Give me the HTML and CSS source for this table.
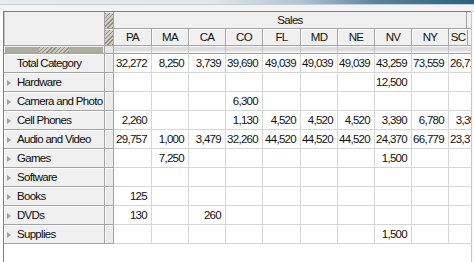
FILE: index.html
```html
<!DOCTYPE html>
<html>
<head>
<meta charset="utf-8">
<link rel="stylesheet" href="styles.css">
</head>
<body>
<div class="titlebar"></div>
<div class="spacer"></div>
<div class="frame">
  <div class="viewport">
    <div class="pivot">
      <div class="corner"></div>
      <div class="grip"><span class="hatch"></span></div>
      <div class="measure"><div class="measure-label">Sales</div></div>
      <div class="grip"><span class="hatch"></span></div>
      <div class="colhead">PA</div><div class="colhead">MA</div><div class="colhead">CA</div><div class="colhead">CO</div><div class="colhead">FL</div><div class="colhead">MD</div><div class="colhead">NE</div><div class="colhead">NV</div><div class="colhead">NY</div><div class="colhead last">SC</div>

      <div class="rowgrip"><div class="hatchbar"><span class="hatchbar-mid"></span></div></div>
      <div class="gripcross"></div>
      <div class="colgrip"></div><div class="colgrip"></div><div class="colgrip"></div><div class="colgrip"></div><div class="colgrip"></div><div class="colgrip"></div><div class="colgrip"></div><div class="colgrip"></div><div class="colgrip"></div><div class="colgrip"></div>

      <div class="rowhead"><span class="twisty none"></span>Total Category</div><div class="handle"></div>
      <div class="cell">32,272</div><div class="cell">8,250</div><div class="cell">3,739</div><div class="cell">39,690</div><div class="cell">49,039</div><div class="cell">49,039</div><div class="cell">49,039</div><div class="cell">43,259</div><div class="cell">73,559</div><div class="cell">26,719</div>

      <div class="rowhead"><span class="twisty"></span>Hardware</div><div class="handle"></div>
      <div class="cell"></div><div class="cell"></div><div class="cell"></div><div class="cell"></div><div class="cell"></div><div class="cell"></div><div class="cell"></div><div class="cell">12,500</div><div class="cell"></div><div class="cell"></div>

      <div class="rowhead"><span class="twisty"></span>Camera and Photo</div><div class="handle"></div>
      <div class="cell"></div><div class="cell"></div><div class="cell"></div><div class="cell">6,300</div><div class="cell"></div><div class="cell"></div><div class="cell"></div><div class="cell"></div><div class="cell"></div><div class="cell"></div>

      <div class="rowhead"><span class="twisty"></span>Cell Phones</div><div class="handle"></div>
      <div class="cell">2,260</div><div class="cell"></div><div class="cell"></div><div class="cell">1,130</div><div class="cell">4,520</div><div class="cell">4,520</div><div class="cell">4,520</div><div class="cell">3,390</div><div class="cell">6,780</div><div class="cell">3,390</div>

      <div class="rowhead"><span class="twisty"></span>Audio and Video</div><div class="handle"></div>
      <div class="cell">29,757</div><div class="cell">1,000</div><div class="cell">3,479</div><div class="cell">32,260</div><div class="cell">44,520</div><div class="cell">44,520</div><div class="cell">44,520</div><div class="cell">24,370</div><div class="cell">66,779</div><div class="cell">23,370</div>

      <div class="rowhead"><span class="twisty"></span>Games</div><div class="handle"></div>
      <div class="cell"></div><div class="cell">7,250</div><div class="cell"></div><div class="cell"></div><div class="cell"></div><div class="cell"></div><div class="cell"></div><div class="cell">1,500</div><div class="cell"></div><div class="cell"></div>

      <div class="rowhead"><span class="twisty"></span>Software</div><div class="handle"></div>
      <div class="cell"></div><div class="cell"></div><div class="cell"></div><div class="cell"></div><div class="cell"></div><div class="cell"></div><div class="cell"></div><div class="cell"></div><div class="cell"></div><div class="cell"></div>

      <div class="rowhead"><span class="twisty"></span>Books</div><div class="handle"></div>
      <div class="cell">125</div><div class="cell"></div><div class="cell"></div><div class="cell"></div><div class="cell"></div><div class="cell"></div><div class="cell"></div><div class="cell"></div><div class="cell"></div><div class="cell"></div>

      <div class="rowhead"><span class="twisty"></span>DVDs</div><div class="handle"></div>
      <div class="cell">130</div><div class="cell"></div><div class="cell">260</div><div class="cell"></div><div class="cell"></div><div class="cell"></div><div class="cell"></div><div class="cell"></div><div class="cell"></div><div class="cell"></div>

      <div class="rowhead"><span class="twisty"></span>Supplies</div><div class="handle"></div>
      <div class="cell"></div><div class="cell"></div><div class="cell"></div><div class="cell"></div><div class="cell"></div><div class="cell"></div><div class="cell"></div><div class="cell">1,500</div><div class="cell"></div><div class="cell"></div>
    </div>
  </div>
  <div class="edge"></div>
</div>
</body>
</html>
```
FILE: styles.css
```css
* { box-sizing: border-box; }
html, body { margin: 0; padding: 0; }
body {
  width: 474px;
  height: 262px;
  overflow: hidden;
  background: #ffffff;
  font-family: "Liberation Sans", Arial, sans-serif;
  font-size: 11.5px;
  letter-spacing: -0.7px;
  color: #111111;
}
.titlebar {
  height: 4px;
  background: linear-gradient(to right, #e7ebee 0%, #e1e6ea 45%, #aec3d1 64%, #55829f 80%, #2c5e7e 100%);
}
.spacer {
  height: 7px;
  border-top: 1px solid #c4ccd3;
  background: #f3f3f3;
}
.frame {
  display: flex;
  height: 251px;
  background: #ffffff;
}
.viewport {
  flex: 1;
  margin-left: 3px;
  border-left: 1px solid #7d7d7d;
  border-top: 1px solid #7d7d7d;
  overflow: hidden;
  background: #ffffff;
}
.edge {
  width: 3px;
  border-left: 1px solid #c8c8c8;
  border-top: 1px solid #d8d8d8;
  background: #fafafa;
}
.pivot {
  display: grid;
  grid-template-columns: 101px 9px 38px 37px 37px 37px 38px 37px 37px 37px 37px 37px;
  grid-template-rows: 17px 17px 8px repeat(10, 19px);
  width: max-content;
}
.corner {
  grid-row: 1 / span 2;
  background: #f0f0f0;
  border-right: 1px solid #a4a4a4;
  border-bottom: 1px solid #a4a4a4;
  box-shadow: inset 1px 0 #c4c4c4;
}
.grip {
  display: flex;
  padding-top: 1px;
  background: #ececec;
  border-right: 1px solid #a4a4a4;
  border-bottom: 1px solid #a4a4a4;
}
.hatch {
  flex: 1;
  background: repeating-linear-gradient(135deg, #8c8c82 0 1px, #cfcfc6 1px 3px);
}
.measure {
  grid-column: 3 / span 10;
  background: #f0f0f0;
  border-bottom: 1px solid #a4a4a4;
}
.measure-label {
  width: 353px;
  height: 100%;
  display: flex;
  align-items: center;
  justify-content: center;
  border-right: 1px solid #a4a4a4;
  color: #111111;
}
.colhead {
  display: flex;
  align-items: center;
  justify-content: center;
  background: #f0f0f0;
  border-right: 1px solid #a4a4a4;
  border-bottom: 1px solid #a4a4a4;
  box-shadow: inset 1px 1px #fafafa;
}
.colhead.last {
  padding-right: 18px;
  background: linear-gradient(to left, #f0f0f0 0 17px, #a4a4a4 17px 18px, #f0f0f0 18px);
}
.rowgrip {
  padding: 1px 1px 0 1px;
  background: #f0f0f0;
  border-right: 1px solid #a4a4a4;
  border-bottom: 1px solid #a4a4a4;
}
.hatchbar {
  height: 6px;
  display: flex;
  justify-content: center;
  background: #adad9f;
}
.hatchbar-mid {
  width: 30px;
  background: repeating-linear-gradient(135deg, #8f8f81 0 1px, #c8c8b9 1px 3px);
}
.gripcross {
  background: #e8e8e8;
  border-right: 1px solid #a4a4a4;
  border-bottom: 1px solid #a4a4a4;
}
.colgrip {
  background: linear-gradient(#f6f6f6 0 1px, #dedede 1px 5px, #f2f2f2 5px);
  border-right: 1px solid #c4c4c4;
  border-bottom: 1px solid #a4a4a4;
}
.rowhead {
  display: flex;
  align-items: center;
  padding-left: 3px;
  white-space: nowrap;
  overflow: hidden;
  background: #f0f0f0;
  border-right: 1px solid #a4a4a4;
  border-bottom: 1px solid #a4a4a4;
  box-shadow: inset 1px 1px #ffffff;
  color: #0c0c0c;
}
.twisty {
  flex: none;
  width: 0;
  height: 0;
  margin: 2px 6px 0 0;
  border-left: 4px solid #a0a0a0;
  border-top: 3.5px solid transparent;
  border-bottom: 3.5px solid transparent;
}
.twisty.none { border-left-color: transparent; }
.handle {
  background: #ebebeb;
  border-right: 1px solid #a4a4a4;
  border-bottom: 1px solid #a4a4a4;
  box-shadow: inset 1px 1px #ffffff;
}
.cell {
  text-align: right;
  padding-right: 4px;
  line-height: 18px;
  white-space: nowrap;
  overflow: hidden;
  background: #ffffff;
  border-right: 1px solid #d6d6d6;
  border-bottom: 1px solid #d6d6d6;
  color: #111111;
}
```
